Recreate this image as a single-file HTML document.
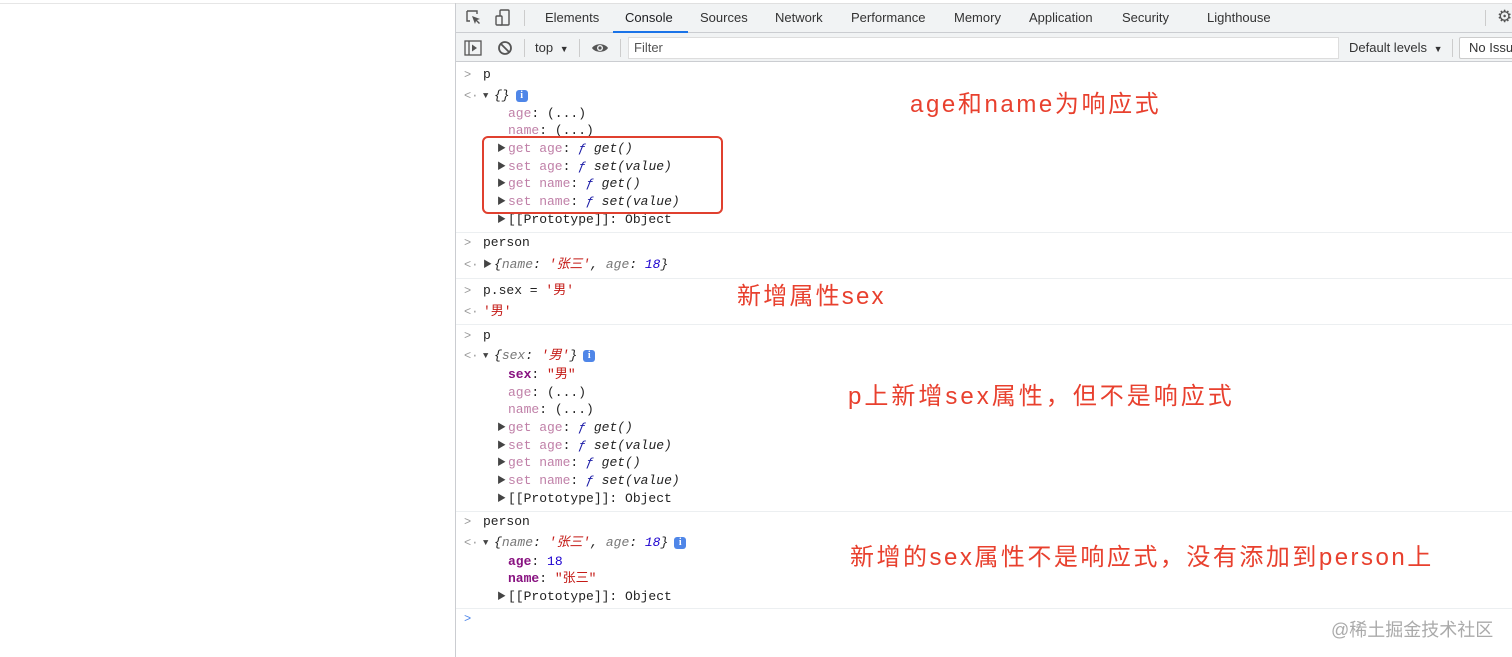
<!DOCTYPE html>
<html><head><meta charset="utf-8"><style>
*{margin:0;padding:0;box-sizing:border-box}
body{width:1512px;height:657px;overflow:hidden;background:#fff;position:relative;font-family:"Liberation Sans","Noto Sans CJK SC",sans-serif}
.a{position:absolute;white-space:nowrap}
.tabs{left:456px;top:3px;width:1056px;height:30px;background:#f1f3f4;border-bottom:1px solid #cbcdd1;border-top:1px solid #e0e0e0}
.tb{left:456px;top:33px;width:1056px;height:29px;background:#f1f3f4;border-bottom:1px solid #cbcdd1}
.t{font-size:13px;color:#333;top:10px}
.l{font-family:"Liberation Mono","Noto Sans CJK SC",monospace;font-size:13px;line-height:18px;height:18px;color:#222}
.k{color:#c080a8}.kk{color:#881280;font-weight:bold}.f{color:#1a1aa6;font-style:italic}.i{font-style:italic}.s{color:#c41a16}.n{color:#1c00cf}.g{color:#777}
.ar{font-size:9px;color:#444;display:inline-block;width:11px;vertical-align:1px}
.ch{color:#999;font-size:12px}
.sep{left:456px;width:1056px;height:1px;background:#eceff1}
.ann{color:#e8402e;font-size:24px;line-height:30px;letter-spacing:2.6px}
.info{display:inline-block;width:12px;height:12px;background:#4f86e8;border-radius:3px;color:#fff;font-size:10px;line-height:12px;text-align:center;font-style:normal;font-family:"Liberation Serif",serif;font-weight:bold;vertical-align:1px;margin-left:6px}
</style></head><body>
<div class="a" style="left:0;top:3px;width:456px;height:1px;background:#e6e6e6"></div>
<div class="a" style="left:455px;top:3px;width:1px;height:654px;background:#cbcdd1"></div>
<div class="a tabs"></div>
<div class="a tb"></div>
<svg class="a" style="left:465px;top:9px" width="18" height="18" viewBox="0 0 18 18"><path d="M2 2h10v3M2 2v10h3" fill="none" stroke="#555" stroke-width="1.4"/><path d="M7 7l8 3-3 1 3 3-1 1-3-3-1 3z" fill="#555"/></svg>
<svg class="a" style="left:494px;top:8px" width="18" height="20" viewBox="0 0 18 20"><rect x="6" y="2" width="9" height="15" rx="1" fill="none" stroke="#555" stroke-width="1.4"/><rect x="2" y="8" width="6" height="9" rx="1" fill="#f1f3f4" stroke="#555" stroke-width="1.4"/></svg>
<div class="a" style="left:524px;top:10px;width:1px;height:16px;background:#ccc"></div>
<div class="a t" style="left:545px">Elements</div>
<div class="a t" style="left:625px;color:#202124">Console</div>
<div class="a" style="left:613px;top:31px;width:75px;height:2px;background:#1a73e8"></div>
<div class="a t" style="left:700px">Sources</div>
<div class="a t" style="left:775px">Network</div>
<div class="a t" style="left:851px">Performance</div>
<div class="a t" style="left:954px">Memory</div>
<div class="a t" style="left:1029px">Application</div>
<div class="a t" style="left:1122px">Security</div>
<div class="a t" style="left:1207px">Lighthouse</div>
<div class="a" style="left:1485px;top:10px;width:1px;height:16px;background:#ccc"></div>
<div class="a" style="left:1497px;top:7px;font-size:17px;color:#555">⚙</div>
<svg class="a" style="left:464px;top:40px" width="18" height="16" viewBox="0 0 18 16"><rect x="1" y="1" width="16" height="14" fill="none" stroke="#555" stroke-width="1.3"/><line x1="5" y1="1" x2="5" y2="15" stroke="#555" stroke-width="1.3"/><path d="M8 4.5l5 3.5-5 3.5z" fill="#555"/></svg>
<svg class="a" style="left:497px;top:40px" width="16" height="16" viewBox="0 0 16 16"><circle cx="8" cy="8" r="6" fill="none" stroke="#555" stroke-width="1.8"/><line x1="4" y1="4" x2="12" y2="12" stroke="#555" stroke-width="1.8"/></svg>
<div class="a" style="left:524px;top:39px;width:1px;height:18px;background:#ccc"></div>
<div class="a" style="left:535px;top:40px;font-size:13px;color:#333">top <span style="font-size:9px;margin-left:3px">▼</span></div>
<div class="a" style="left:579px;top:39px;width:1px;height:18px;background:#ccc"></div>
<svg class="a" style="left:591px;top:41px" width="18" height="14" viewBox="0 0 18 14"><path d="M1 7C4 2 14 2 17 7C14 12 4 12 1 7z" fill="#555"/><circle cx="9" cy="7" r="3" fill="#f1f3f4"/><circle cx="9" cy="7" r="1.6" fill="#555"/></svg>
<div class="a" style="left:620px;top:39px;width:1px;height:18px;background:#ccc"></div>
<div class="a" style="left:628px;top:37px;width:711px;height:22px;background:#fff;border:1px solid #ddd"></div>
<div class="a" style="left:634px;top:40px;font-size:13px;color:#555">Filter</div>
<div class="a" style="left:1349px;top:40px;font-size:13px;color:#333">Default levels <span style="font-size:9px;margin-left:3px">▼</span></div>
<div class="a" style="left:1452px;top:39px;width:1px;height:18px;background:#ccc"></div>
<div class="a" style="left:1459px;top:37px;width:60px;height:22px;background:#fff;border:1px solid #ccc;border-radius:2px;font-size:13px;color:#333;padding:2px 0 0 9px">No Issues</div>

<div class="a l ch" style="left:464px;top:66px">&gt;</div><div class="a l" style="left:483px;top:66px">p</div>
<div class="a l ch" style="left:464px;top:87px">&lt;·</div><div class="a l" style="left:483px;top:87px"><span class="ar">▼</span><span class="i">{}</span><span class="info">i</span></div>
<div class="a l" style="left:508px;top:105px"><span class="k">age</span>: (...)</div>
<div class="a l" style="left:508px;top:122px"><span class="k">name</span>: (...)</div>
<div class="a l" style="left:497px;top:140px"><span class="ar">▶</span><span class="k">get age</span>: <span class="f">ƒ</span> <span class="i">get()</span></div>
<div class="a l" style="left:497px;top:158px"><span class="ar">▶</span><span class="k">set age</span>: <span class="f">ƒ</span> <span class="i">set(value)</span></div>
<div class="a l" style="left:497px;top:175px"><span class="ar">▶</span><span class="k">get name</span>: <span class="f">ƒ</span> <span class="i">get()</span></div>
<div class="a l" style="left:497px;top:193px"><span class="ar">▶</span><span class="k">set name</span>: <span class="f">ƒ</span> <span class="i">set(value)</span></div>
<div class="a l" style="left:497px;top:211px"><span class="ar">▶</span>[[Prototype]]: Object</div>
<div class="a" style="left:482px;top:136px;width:241px;height:78px;border:2px solid #e0402f;border-radius:6px"></div>
<div class="a sep" style="top:232px"></div>
<div class="a l ch" style="left:464px;top:234px">&gt;</div><div class="a l" style="left:483px;top:234px">person</div>
<div class="a l ch" style="left:464px;top:256px">&lt;·</div><div class="a l" style="left:483px;top:256px"><span class="ar">▶</span><span class="i">{<span class="g">name</span>: <span class="s">'张三'</span>, <span class="g">age</span>: <span class="n">18</span>}</span></div>
<div class="a sep" style="top:278px"></div>
<div class="a l ch" style="left:464px;top:282px">&gt;</div><div class="a l" style="left:483px;top:282px">p.sex = <span class="s">'男'</span></div>
<div class="a l ch" style="left:464px;top:303px">&lt;·</div><div class="a l s" style="left:483px;top:303px">'男'</div>
<div class="a sep" style="top:324px"></div>
<div class="a l ch" style="left:464px;top:327px">&gt;</div><div class="a l" style="left:483px;top:327px">p</div>
<div class="a l ch" style="left:464px;top:347px">&lt;·</div><div class="a l" style="left:483px;top:347px"><span class="ar">▼</span><span class="i">{<span class="g">sex</span>: <span class="s">'男'</span>}</span><span class="info">i</span></div>
<div class="a l" style="left:508px;top:366px"><span class="kk">sex</span>: <span class="s">"男"</span></div>
<div class="a l" style="left:508px;top:384px"><span class="k">age</span>: (...)</div>
<div class="a l" style="left:508px;top:401px"><span class="k">name</span>: (...)</div>
<div class="a l" style="left:497px;top:419px"><span class="ar">▶</span><span class="k">get age</span>: <span class="f">ƒ</span> <span class="i">get()</span></div>
<div class="a l" style="left:497px;top:437px"><span class="ar">▶</span><span class="k">set age</span>: <span class="f">ƒ</span> <span class="i">set(value)</span></div>
<div class="a l" style="left:497px;top:454px"><span class="ar">▶</span><span class="k">get name</span>: <span class="f">ƒ</span> <span class="i">get()</span></div>
<div class="a l" style="left:497px;top:472px"><span class="ar">▶</span><span class="k">set name</span>: <span class="f">ƒ</span> <span class="i">set(value)</span></div>
<div class="a l" style="left:497px;top:490px"><span class="ar">▶</span>[[Prototype]]: Object</div>
<div class="a sep" style="top:511px"></div>
<div class="a l ch" style="left:464px;top:513px">&gt;</div><div class="a l" style="left:483px;top:513px">person</div>
<div class="a l ch" style="left:464px;top:534px">&lt;·</div><div class="a l" style="left:483px;top:534px"><span class="ar">▼</span><span class="i">{<span class="g">name</span>: <span class="s">'张三'</span>, <span class="g">age</span>: <span class="n">18</span>}</span><span class="info">i</span></div>
<div class="a l" style="left:508px;top:553px"><span class="kk">age</span>: <span class="n">18</span></div>
<div class="a l" style="left:508px;top:570px"><span class="kk">name</span>: <span class="s">"张三"</span></div>
<div class="a l" style="left:497px;top:588px"><span class="ar">▶</span>[[Prototype]]: Object</div>
<div class="a sep" style="top:608px"></div>
<div class="a l" style="left:464px;top:610px;color:#4f86e8;font-size:12px">&gt;</div>

<div class="a ann" style="left:910px;top:90px">age和name为响应式</div>
<div class="a ann" style="left:737px;top:282px;letter-spacing:2.2px">新增属性sex</div>
<div class="a ann" style="left:848px;top:382px;letter-spacing:3px">p上新增sex属性，但不是响应式</div>
<div class="a ann" style="left:850px;top:543px;letter-spacing:2.5px">新增的sex属性不是响应式，没有添加到person上</div>
<div class="a" style="left:1331px;top:616px;font-size:18px;color:#aaa">@稀土掘金技术社区</div>
</body></html>
